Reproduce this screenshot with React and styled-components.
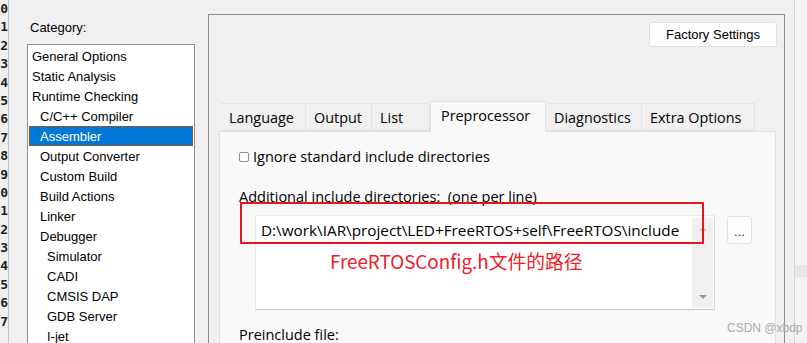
import React from "react";
import styled, { createGlobalStyle } from "styled-components";

const GlobalStyle = createGlobalStyle`
  html, body {
    margin: 0;
    padding: 0;
    background: #f0f0f0;
    overflow: hidden;
  }
`;

const categories = [
  { label: "General Options", level: 0 },
  { label: "Static Analysis", level: 0 },
  { label: "Runtime Checking", level: 0 },
  { label: "C/C++ Compiler", level: 1 },
  { label: "Assembler", level: 1, selected: true },
  { label: "Output Converter", level: 1 },
  { label: "Custom Build", level: 1 },
  { label: "Build Actions", level: 1 },
  { label: "Linker", level: 1 },
  { label: "Debugger", level: 1 },
  { label: "Simulator", level: 2 },
  { label: "CADI", level: 2 },
  { label: "CMSIS DAP", level: 2 },
  { label: "GDB Server", level: 2 },
  { label: "I-jet", level: 2 },
];

const tabs = [
  { label: "Language", width: 85 },
  { label: "Output", width: 66 },
  { label: "List", width: 58 },
  { label: "Preprocessor", width: 116, active: true },
  { label: "Diagnostics", width: 96 },
  { label: "Extra Options", width: 113 },
];

const gutterDigits = "012345678901234567".split("");

const App = () => {
  return (
    <>
      <GlobalStyle />
      <Screen>
        <Gutter>
          {gutterDigits.map((d, i) => (
            <GutterLine key={i}>{d}</GutterLine>
          ))}
        </Gutter>

        <CategoryPane>
          <CategoryLabel>Category:</CategoryLabel>
          <CategoryList>
            {categories.map((c) => (
              <CategoryItem key={c.label} $level={c.level} $selected={c.selected}>
                {c.label}
              </CategoryItem>
            ))}
          </CategoryList>
        </CategoryPane>

        <Frame>
          <ButtonRow>
            <FactoryButton>Factory Settings</FactoryButton>
          </ButtonRow>

          <TabStrip>
            {tabs.map((t) => (
              <Tab key={t.label} $width={t.width} $active={t.active}>
                {t.label}
              </Tab>
            ))}
          </TabStrip>

          <TabPanel>
            <CheckRow>
              <CheckBox />
              Ignore standard include directories
            </CheckRow>

            <FieldLabel $top={21}>Additional include directories:&nbsp; (one per line)</FieldLabel>

            <IncludeRow>
              <IncludeBox>
                <IncludeText>D:\work\IAR\project\LED+FreeRTOS+self\FreeRTOS\include</IncludeText>
                <ScrollBar>
                  <Arrow $up />
                  <Arrow />
                </ScrollBar>
              </IncludeBox>
              <BrowseButton>...</BrowseButton>
            </IncludeRow>

            <FieldLabel $top={15}>Preinclude file:</FieldLabel>

            <Highlight />
            <Annotation>FreeRTOSConfig.h文件的路径</Annotation>
          </TabPanel>
        </Frame>

        <SideStrip>
          <SideBand />
        </SideStrip>

        <Watermark>CSDN @xbdp</Watermark>
      </Screen>
    </>
  );
};

const Screen = styled.div`
  position: relative;
  display: flex;
  width: 807px;
  height: 343px;
  overflow: hidden;
  background: #f0f0f0;
`;

const Gutter = styled.div`
  width: 8px;
  flex-shrink: 0;
  border-right: 1px solid #c4c4c4;
  overflow: hidden;
`;

const GutterLine = styled.div`
  height: 18.4px;
  line-height: 18.4px;
  font-family: "DejaVu Sans Mono", monospace;
  font-weight: bold;
  font-size: 13px;
  color: #1e1e1e;
  text-align: right;
  white-space: nowrap;
`;

const CategoryPane = styled.div`
  width: 168px;
  flex-shrink: 0;
  padding: 20px 0 0 18px;
  margin-right: 13px;
  font-family: "Liberation Sans", Arial, sans-serif;
  font-size: 13px;
  color: #000;
`;

const CategoryLabel = styled.div`
  height: 16px;
  line-height: 16px;
  padding-left: 3px;
  margin-bottom: 8px;
`;

const CategoryList = styled.div`
  background: #fff;
  border: 1px solid #8c9096;
  padding-top: 1px;
  height: 400px;
`;

const indents = [2, 10, 17];

const CategoryItem = styled.div`
  height: 20px;
  margin: 0 1px;
  box-sizing: border-box;
  padding: 1px 0 0 ${(p) => indents[p.$level]}px;
  line-height: 18px;
  white-space: nowrap;
  color: ${(p) => (p.$selected ? "#fff" : "#000")};
  background: ${(p) => (p.$selected ? "#0078d7" : "transparent")};
  border: 1px solid ${(p) => (p.$selected ? "#8b5a2e" : "transparent")};
`;

const Frame = styled.div`
  width: 577px;
  flex-shrink: 0;
  margin-top: 14px;
  border: 1px solid #8e8e8e;
  border-bottom: none;
  padding: 7px 7px 0 10px;
  box-sizing: border-box;
  display: flex;
  flex-direction: column;
`;

const ButtonRow = styled.div`
  display: flex;
  justify-content: flex-end;
`;

const FactoryButton = styled.div`
  width: 128px;
  height: 25px;
  box-sizing: border-box;
  background: #fdfdfd;
  border: 1px solid #e1e1e1;
  border-radius: 2px;
  font-family: "Liberation Sans", Arial, sans-serif;
  font-size: 13px;
  color: #000;
  display: flex;
  align-items: center;
  justify-content: center;
`;

const TabStrip = styled.div`
  display: flex;
  align-items: flex-end;
  height: 30px;
  margin-top: 54px;
  padding-left: 2px;
  position: relative;
  z-index: 1;
`;

const Tab = styled.div`
  width: ${(p) => p.$width}px;
  height: ${(p) => (p.$active ? 31 : 28)}px;
  margin-bottom: ${(p) => (p.$active ? -1 : 0)}px;
  box-sizing: border-box;
  padding: ${(p) => (p.$active ? "0 0 4px 10px" : "0 0 0 8px")};
  display: flex;
  align-items: center;
  background: ${(p) => (p.$active ? "#f9f9f9" : "#f0f0f0")};
  border: 1px solid #e3e3e3;
  border-bottom: ${(p) => (p.$active ? "none" : "1px solid #e3e3e3")};
  border-left: ${(p) => (p.$active ? "1px solid #e3e3e3" : "none")};
  font-family: "Open Sans", "Noto Sans", sans-serif;
  font-size: 14.4px;
  color: #000;
  white-space: nowrap;
`;

const TabPanel = styled.div`
  position: relative;
  flex: 1;
  margin-right: 1px;
  background: #f9f9f9;
  border: 1px solid #e3e3e3;
  border-bottom: none;
  padding: 14px 0 0 19px;
  font-family: "Open Sans", "Noto Sans", sans-serif;
  font-size: 14.5px;
  color: #000;
`;

const CheckRow = styled.div`
  display: flex;
  align-items: center;
  height: 20px;
  white-space: nowrap;
`;

const CheckBox = styled.span`
  width: 10px;
  height: 10px;
  box-sizing: border-box;
  border: 1px solid #8f8f8f;
  border-radius: 2px;
  background: #fafafa;
  margin: 1px 4px 0 0;
`;

const FieldLabel = styled.div`
  height: 20px;
  line-height: 20px;
  margin-top: ${(p) => p.$top}px;
  white-space: nowrap;
`;

const IncludeRow = styled.div`
  display: flex;
  align-items: flex-start;
  margin: 8px 0 0 16px;
`;

const IncludeBox = styled.div`
  width: 460px;
  height: 95px;
  box-sizing: border-box;
  background: #fff;
  border: 1px solid #ebebeb;
  border-bottom: 1px solid #c6c6c6;
  border-right: 1px solid #dcdcdc;
  display: flex;
  justify-content: space-between;
`;

const IncludeText = styled.div`
  padding: 4px 0 0 5px;
  height: 20px;
  line-height: 20px;
  font-size: 15.3px;
  white-space: nowrap;
`;

const ScrollBar = styled.div`
  width: 21px;
  margin: 2px 1px 1px 0;
  background: #f0f0f0;
  display: flex;
  flex-direction: column;
  justify-content: space-between;
  align-items: center;
  padding: 9px 0 9px;
  box-sizing: border-box;
`;

const Arrow = styled.span`
  width: 0;
  height: 0;
  border-left: 4px solid transparent;
  border-right: 4px solid transparent;
  ${(p) =>
    p.$up
      ? "border-bottom: 4px solid #c8c8c8;"
      : "border-top: 4px solid #9a9a9a;"}
`;

const BrowseButton = styled.div`
  width: 25px;
  height: 28px;
  margin: 1px 0 0 12px;
  box-sizing: border-box;
  background: #fdfdfd;
  border: 1px solid #e1e1e1;
  border-radius: 3px;
  display: flex;
  align-items: center;
  justify-content: center;
  font-family: "Liberation Sans", Arial, sans-serif;
  font-size: 13px;
  padding-top: 2px;
  color: #333;
`;

const Highlight = styled.div`
  position: absolute;
  left: 20px;
  top: 70px;
  width: 464px;
  height: 42px;
  box-sizing: border-box;
  border: 2px solid #e8151d;
  pointer-events: none;
`;

const Annotation = styled.div`
  position: absolute;
  left: 110px;
  top: 117px;
  line-height: 24px;
  font-family: "Noto Sans CJK SC", sans-serif;
  font-size: 18.8px;
  color: #ef2027;
  white-space: nowrap;
`;

const SideStrip = styled.div`
  flex: 1;
  margin-left: 9px;
  border-left: 1px solid #d4d4d4;
  background: #f3f3f3;
  padding-top: 265px;
`;

const SideBand = styled.div`
  height: 12px;
  background: #e6e6e6;
`;

const Watermark = styled.div`
  position: absolute;
  left: 727px;
  top: 320px;
  line-height: 16px;
  font-family: "Liberation Sans", Arial, sans-serif;
  font-size: 12px;
  color: #ababab;
  white-space: nowrap;
`;

export default App;
